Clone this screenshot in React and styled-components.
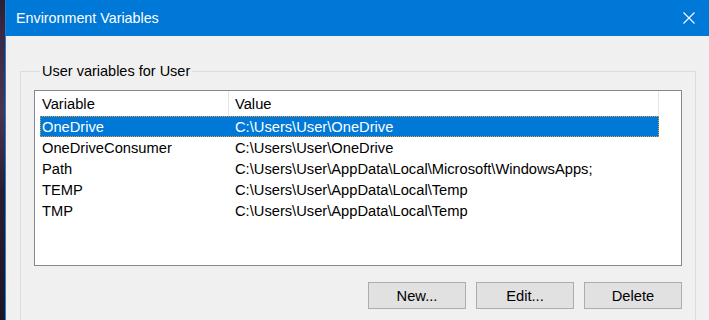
import styled, { createGlobalStyle } from 'styled-components';

const variables = [
    { name: "OneDrive", value: "C:\\Users\\User\\OneDrive" },
    { name: "OneDriveConsumer", value: "C:\\Users\\User\\OneDrive" },
    { name: "Path", value: "C:\\Users\\User\\AppData\\Local\\Microsoft\\WindowsApps;" },
    { name: "TEMP", value: "C:\\Users\\User\\AppData\\Local\\Temp" },
    { name: "TMP", value: "C:\\Users\\User\\AppData\\Local\\Temp" },
];

export default function App() {
    return (
        <>
            <Global />
            <Screen>
                <Desktop />
                <Window>
                    <TitleBar>
                        <Title>Environment Variables</Title>
                        <Close aria-label="Close">
                            <svg width="12" height="12" viewBox="0 0 12 12">
                                <path d="M0.5 0.5 L11.5 11.5 M11.5 0.5 L0.5 11.5" stroke="#fff" strokeWidth="1.1" />
                            </svg>
                        </Close>
                    </TitleBar>
                    <Body>
                        <Group>
                            <Legend>User variables for User</Legend>
                            <ListBox>
                                <Header>
                                    <HeaderCell $width={193} $pad={7}>Variable</HeaderCell>
                                    <HeaderCell $width={429} $pad={6}>Value</HeaderCell>
                                </Header>
                                {variables.map((v, i) => (
                                    <Row key={v.name} $selected={i === 0}>
                                        <NameCell>{v.name}</NameCell>
                                        <ValueCell>{v.value}</ValueCell>
                                    </Row>
                                ))}
                            </ListBox>
                            <Buttons>
                                <Button>New...</Button>
                                <Button>Edit...</Button>
                                <Button>Delete</Button>
                            </Buttons>
                        </Group>
                    </Body>
                </Window>
            </Screen>
        </>
    )
};

const Global = createGlobalStyle`
    html, body {
        margin: 0;
        height: 320px;
        overflow: hidden;
        background: #f0f0f0;
    }
    * {
        box-sizing: border-box;
    }
`;

const Screen = styled.div`
    display: flex;
    height: 320px;
    font-family: 'Liberation Sans', Arial, sans-serif;
    font-size: 14.7px;
    color: #000;
`;

const Desktop = styled.div`
    width: 5px;
    flex-shrink: 0;
    background: linear-gradient(180deg, #2c1f33 0%, #3b2a45 12%, #4a3450 35%, #2a1c30 60%, #1c1524 100%);
`;

const Window = styled.div`
    flex: 1;
    display: flex;
    flex-direction: column;
    border-left: 1px solid #1883d7;
    background: #f0f0f0;
`;

const TitleBar = styled.div`
    height: 36px;
    flex-shrink: 0;
    background: #0078d7;
    display: flex;
    align-items: center;
    justify-content: space-between;
    padding: 0 14px 0 10px;
`;

const Title = styled.div`
    color: #fff;
    font-size: 14.3px;
    line-height: 18px;
`;

const Close = styled.div`
    width: 12px;
    height: 12px;
    display: flex;
`;

const Body = styled.div`
    padding: 26px 13px 0 14px;
`;

const Group = styled.fieldset`
    margin: 0;
    border: 1px solid #dcdcdc;
    padding: 10px 13px 20px 13px;
`;

const Legend = styled.legend`
    margin-left: 6px;
    padding: 0 2px;
    line-height: 18px;
    font-size: 14.5px;
`;

const ListBox = styled.div`
    height: 176px;
    border: 1px solid #828790;
    background: #fff;
`;

const Header = styled.div`
    display: flex;
    height: 25px;
`;

const HeaderCell = styled.div`
    width: ${props => props.$width + 1}px;
    padding-left: ${props => props.$pad}px;
    border-right: 1px solid #e5e5e5;
    display: flex;
    align-items: center;
`;

const Row = styled.div`
    display: grid;
    grid-template-columns: 194px 1fr;
    align-items: center;
    margin-left: 5px;
    width: 619px;
    height: 21px;
    border: 1px ${props => props.$selected ? 'dotted #f39a2a' : 'solid transparent'};
    background: ${props => props.$selected ? '#0078d7' : 'transparent'};
    color: ${props => props.$selected ? '#fff' : '#000'};
    white-space: nowrap;
`;

const NameCell = styled.div`
    padding-left: 1px;
`;

const ValueCell = styled.div``;

const Buttons = styled.div`
    display: flex;
    justify-content: flex-end;
    gap: 10px;
    margin-top: 16px;
`;

const Button = styled.button`
    width: 98px;
    height: 27px;
    background: #e1e1e1;
    border: 1px solid #adadad;
    border-radius: 0;
    font-family: inherit;
    font-size: 14.7px;
    color: #000;
    padding: 0;
`;
